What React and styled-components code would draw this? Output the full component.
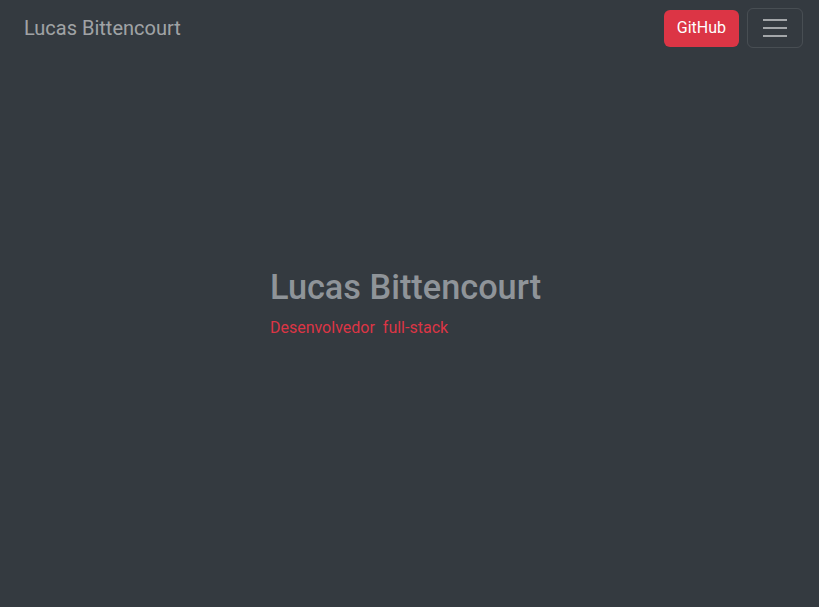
import React from "react";
import styled, { createGlobalStyle } from "styled-components";

const GlobalStyle = createGlobalStyle`
  html, body {
    margin: 0;
    padding: 0;
    background: #343a40;
    font-family: Roboto, "Liberation Sans", sans-serif;
    overflow: hidden;
  }
`;

const Page = styled.div`
  min-height: 100vh;
  background: #343a40;
  color: #dee2e6;
`;

const Navbar = styled.nav`
  display: flex;
  align-items: center;
  justify-content: space-between;
  height: 56px;
  padding: 0 16px 0 24px;
  box-sizing: border-box;
`;

const Brand = styled.a`
  font-size: 20px;
  line-height: 30px;
  color: rgba(255, 255, 255, 0.55);
  text-decoration: none;
`;

const Actions = styled.div`
  display: flex;
  align-items: center;
  gap: 8px;
`;

const Button = styled.a`
  display: inline-block;
  padding: 6px 13px 7px;
  font-size: 16px;
  line-height: 24px;
  border-radius: 6px;
  color: #fff;
  background: #dc3545;
  text-decoration: none;
`;

const Toggler = styled.button`
  display: flex;
  flex-direction: column;
  align-items: center;
  justify-content: center;
  gap: 6px;
  width: 56px;
  height: 40px;
  padding: 0;
  background: transparent;
  border: 1px solid rgba(255, 255, 255, 0.1);
  border-radius: 6px;
  span {
    display: block;
    width: 24px;
    height: 2px;
    background: rgba(255, 255, 255, 0.55);
  }
`;

const Hero = styled.section`
  height: 543px;
  display: flex;
  align-items: center;
  justify-content: center;
  padding-bottom: 48px;
  box-sizing: border-box;
`;

const HeroText = styled.div`
  text-align: left;
  margin-left: -8px;
`;

const Title = styled.h1`
  margin: 0 0 8px;
  font-size: 34.3px;
  font-weight: 500;
  line-height: 1.2;
  color: #8f9499;
`;

const Subtitle = styled.p`
  margin: 0;
  font-size: 16px;
  line-height: 24px;
  color: #dc3545;
  span + span {
    margin-left: 8px;
  }
`;

const About = styled.section`
  padding: 4px 0 0 130px;
  p {
    margin: 0;
    font-size: 16px;
    line-height: 24px;
    color: rgba(255, 255, 255, 0.55);
  }
`;

export default function App() {
  return (
    <Page>
      <GlobalStyle />
      <Navbar>
        <Brand href="#">Lucas Bittencourt</Brand>
        <Actions>
          <Button href="#">GitHub</Button>
          <Toggler aria-label="menu">
            <span />
            <span />
            <span />
          </Toggler>
        </Actions>
      </Navbar>
      <Hero>
        <HeroText>
          <Title>Lucas Bittencourt</Title>
          <Subtitle>
            <span>Desenvolvedor</span>
            <span>full-stack</span>
          </Subtitle>
        </HeroText>
      </Hero>
      <About>
        <p>Olá, sou Lucas, desenvolvedor full-stack apaixonado por tecnologia.</p>
      </About>
    </Page>
  );
}
